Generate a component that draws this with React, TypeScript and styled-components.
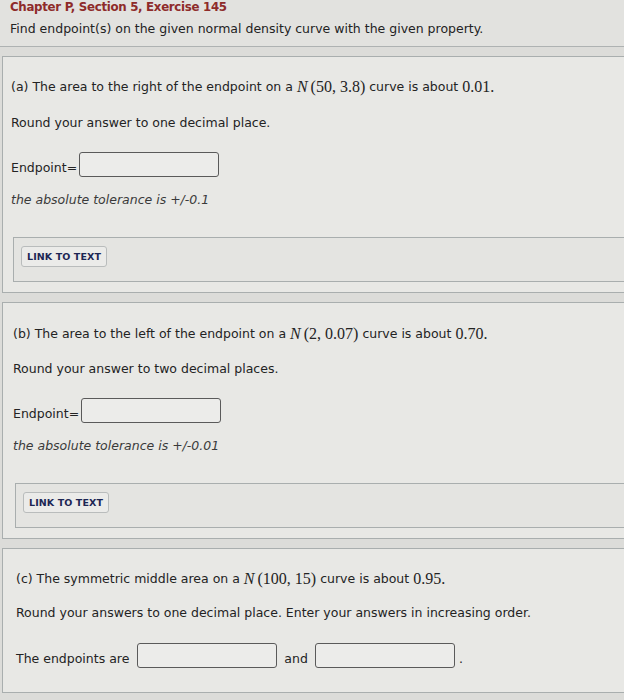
import React from "react";
import styled, { createGlobalStyle } from "styled-components";

const Global = createGlobalStyle`
  html, body {
    margin: 0;
    padding: 0;
    background: #dcdcd9;
    overflow: hidden;
  }
  body {
    font-family: "DejaVu Sans", Verdana, sans-serif;
    color: #232323;
  }
`;

const Page = styled.div`
  width: 640px;
`;

const Header = styled.div`
  padding: 0 0 8px 10px;
  border-bottom: 1px solid #aeb2b2;
  background: #e2e2df;
`;

const Title = styled.div`
  font-size: 11.8px;
  letter-spacing: -0.3px;
  font-weight: bold;
  color: #8e2b2a;
  line-height: 14px;
`;

const Intro = styled.div`
  font-size: 12.5px;
  line-height: 18px;
  margin-top: 6px;
`;

const Panels = styled.div`
  padding-top: 9px;
  display: flex;
  flex-direction: column;
  gap: 9px;
`;

const Panel = styled.section<{ $pt: number; $pl: number; $pb: number }>`
  margin-left: 2px;
  border: 1px solid #a9aeae;
  border-right: none;
  background: #e8e8e5;
  padding: ${(p) => p.$pt}px 0 ${(p) => p.$pb}px ${(p) => p.$pl}px;
  display: flex;
  flex-direction: column;
`;

const Line = styled.div<{ $mt?: number }>`
  font-size: 12.5px;
  line-height: 20px;
  margin-top: ${(p) => p.$mt ?? 0}px;
  display: flex;
  align-items: center;
  white-space: nowrap;
`;

const Tolerance = styled(Line)`
  font-style: italic;
  color: #3a3a3a;
`;

const Math = styled.span`
  font-family: "Liberation Serif", "Times New Roman", serif;
  font-size: 16px;
  margin: 0 4px;
`;

const MathTail = styled.span`
  font-family: "Liberation Serif", "Times New Roman", serif;
  font-size: 16px;
  margin-left: 4px;
`;

const Ital = styled.i`
  margin-right: 3px;
`;

const Input = styled.span<{ $w?: number }>`
  display: inline-block;
  width: ${(p) => p.$w ?? 138}px;
  height: 23px;
  border: 1px solid #5a5a5a;
  border-radius: 3px;
  background: #ececea;
  box-sizing: content-box;
`;

const Row = styled.div<{ $mt: number }>`
  margin-top: ${(p) => p.$mt}px;
  display: flex;
  align-items: center;
  font-size: 12.5px;
  white-space: nowrap;
`;

const Word = styled.span<{ $ml?: number; $mr?: number }>`
  margin-left: ${(p) => p.$ml ?? 0}px;
  margin-right: ${(p) => p.$mr ?? 0}px;
  padding-top: 6px;
`;

const LinkBox = styled.div`
  margin-top: 27px;
  margin-left: 2px;
  border: 1px solid #a9aeae;
  border-right: none;
  background: #e4e4e1;
  padding: 7px 0 14px 7px;
`;

const LinkButton = styled.button`
  font-family: "DejaVu Sans", Verdana, sans-serif;
  font-size: 9.5px;
  font-weight: bold;
  color: #1c2654;
  background: #ebebe9;
  border: 1px solid #b9bcbc;
  border-radius: 3px;
  height: 21px;
  padding: 0 5px;
  letter-spacing: 0.1px;
`;

export default function App() {
  return (
    <Page>
      <Global />
      <Header>
        <Title>Chapter P, Section 5, Exercise 145</Title>
        <Intro>Find endpoint(s) on the given normal density curve with the given property.</Intro>
      </Header>
      <Panels>
        <Panel $pt={20} $pl={8} $pb={10}>
          <Line>
            (a) The area to the right of the endpoint on a
            <Math>
              <Ital>N</Ital>(50, 3.8)
            </Math>
            curve is about<MathTail>0.01.</MathTail>
          </Line>
          <Line $mt={16}>Round your answer to one decimal place.</Line>
          <Row $mt={19}>
            <Word $mr={2}>Endpoint=</Word>
            <Input />
          </Row>
          <Tolerance $mt={13}>the absolute tolerance is +/-0.1</Tolerance>
          <LinkBox>
            <LinkButton>LINK TO TEXT</LinkButton>
          </LinkBox>
        </Panel>
        <Panel $pt={21} $pl={10} $pb={10}>
          <Line>
            (b) The area to the left of the endpoint on a
            <Math>
              <Ital>N</Ital>(2, 0.07)
            </Math>
            curve is about<MathTail>0.70.</MathTail>
          </Line>
          <Line $mt={15}>Round your answer to two decimal places.</Line>
          <Row $mt={19}>
            <Word $mr={2}>Endpoint=</Word>
            <Input />
          </Row>
          <Tolerance $mt={13}>the absolute tolerance is +/-0.01</Tolerance>
          <LinkBox>
            <LinkButton>LINK TO TEXT</LinkButton>
          </LinkBox>
        </Panel>
        <Panel $pt={20} $pl={13} $pb={24}>
          <Line>
            (c) The symmetric middle area on a
            <Math>
              <Ital>N</Ital>(100, 15)
            </Math>
            curve is about<MathTail>0.95.</MathTail>
          </Line>
          <Line $mt={14}>Round your answers to one decimal place. Enter your answers in increasing order.</Line>
          <Row $mt={20}>
            <Word $mr={8}>The endpoints are</Word>
            <Input />
            <Word $ml={7} $mr={7}>and</Word>
            <Input />
            <Word $ml={4}>.</Word>
          </Row>
        </Panel>
      </Panels>
    </Page>
  );
}
